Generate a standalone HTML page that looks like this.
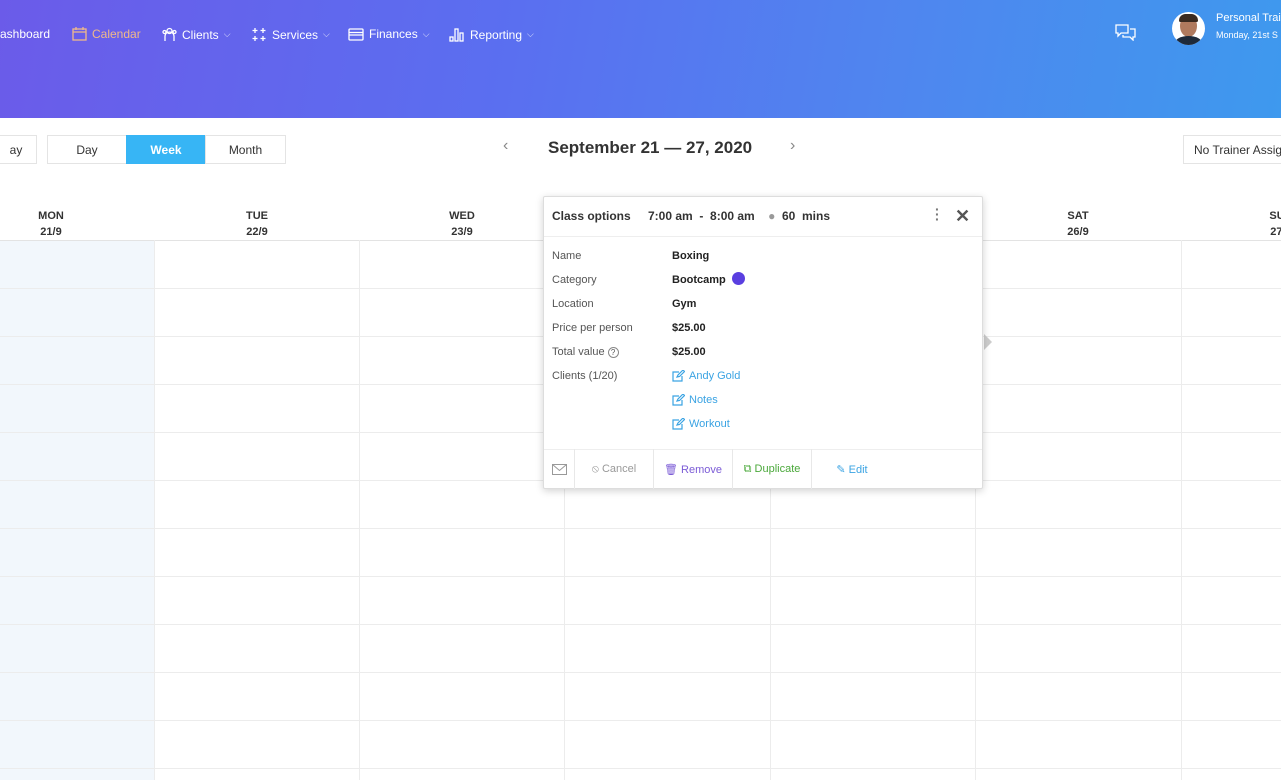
<!DOCTYPE html>
<html><head><style>
*{box-sizing:border-box;margin:0;padding:0}
body{width:1281px;height:780px;overflow:hidden;background:#fff;font-family:"Liberation Sans",Arial,sans-serif;position:relative}
.hdr{position:absolute;left:0;top:0;width:1281px;height:118px;background:linear-gradient(100deg,#6b5be9 0%,#5a6ff0 40%,#4f86ef 70%,#3e99ee 100%)}
.nav{position:absolute;top:27px;color:#fff;font-size:12px;display:flex;align-items:center;gap:5px}
.nav svg{stroke:#fff;fill:none;stroke-width:1.3}
.chev{font-size:9px;opacity:.8}
.btn{position:absolute;top:135px;height:29px;border:1px solid #e4e4e4;font-size:12px;color:#333;display:flex;align-items:center;justify-content:center}
.grid{position:absolute;left:0;top:240px;width:1281px;height:540px}
.dh{position:absolute;top:208px;width:80px;text-align:center;font-size:11px;font-weight:bold;color:#333;line-height:16px}
.pop{position:absolute;left:543px;top:196px;width:440px;height:293px;background:#fff;border:1px solid #ddd;box-shadow:0 2px 8px rgba(0,0,0,.18);border-radius:2px}
.lbl{position:absolute;left:8px;font-size:11px;color:#555}
.val{position:absolute;left:128px;font-size:11px;color:#222;font-weight:bold}
.lnk{position:absolute;left:128px;font-size:11px;color:#3aa3e3;display:flex;align-items:center;gap:4px}
.ft{position:absolute;top:252px;height:40px;border-right:1px solid #e8e8e8;display:flex;align-items:center;justify-content:center;font-size:11px;gap:4px}
</style></head><body>
<div class="hdr"></div>
<div class="nav" style="left:0">ashboard</div>
<div class="nav" style="left:72px;color:#f0b98a"><svg width="15" height="14" viewBox="0 0 15 14" style="stroke:#f0b98a"><rect x="1" y="2" width="13" height="11"/><path d="M1 5h13M4 0v3M11 0v3"/></svg>Calendar</div>
<div class="nav" style="left:162px"><svg width="15" height="15" viewBox="0 0 15 15"><circle cx="7.5" cy="4" r="2.5"/><path d="M3 14V9a4.5 4 0 0 1 9 0v5"/><circle cx="2.5" cy="5" r="1.5"/><circle cx="12.5" cy="5" r="1.5"/></svg>Clients<span class="chev">⌵</span></div>
<div class="nav" style="left:251px"><svg width="16" height="15" viewBox="0 0 16 15"><path d="M4 1v5M1.5 3.5h5M12 1v5M9.5 3.5h5M4 9v5M1.5 11.5h5M12 9v5M9.5 11.5h5"/></svg>Services<span class="chev">⌵</span></div>
<div class="nav" style="left:348px"><svg width="16" height="13" viewBox="0 0 16 13"><rect x="1" y="1" width="14" height="11" rx="1"/><path d="M1 4.5h14M1 7h14"/></svg>Finances<span class="chev">⌵</span></div>
<div class="nav" style="left:449px"><svg width="16" height="15" viewBox="0 0 16 15"><rect x="1" y="10" width="3" height="4"/><rect x="6" y="2" width="3" height="12"/><rect x="11" y="6" width="3" height="8"/></svg>Reporting<span class="chev">⌵</span></div>
<svg style="position:absolute;left:1115px;top:24px" width="21" height="17" viewBox="0 0 21 17" fill="none" stroke="#fff" stroke-width="1.3"><path d="M1 1h12v8H6l-3 3V9H1z"/><path d="M15 5h5v8h-2v3l-3-3H8v-2"/></svg>
<div style="position:absolute;left:1172px;top:12px;width:33px;height:33px;border-radius:50%;background:#fff;overflow:hidden"><div style="position:absolute;left:8px;top:3px;width:17px;height:22px;border-radius:50%;background:#b07a5e"></div><div style="position:absolute;left:7px;top:2px;width:19px;height:8px;border-radius:9px 9px 2px 2px;background:#3a2a20"></div><div style="position:absolute;left:3px;top:24px;width:27px;height:14px;border-radius:50% 50% 0 0;background:#1e2a3a"></div></div>
<div style="position:absolute;left:1216px;top:12px;color:#fff;font-size:11px;white-space:nowrap">Personal Trai</div>
<div style="position:absolute;left:1216px;top:30px;color:#fff;font-size:9px;white-space:nowrap">Monday, 21st S</div>

<div class="btn" style="left:-5px;width:42px">ay</div>
<div class="btn" style="left:47px;width:80px">Day</div>
<div class="btn" style="left:126px;width:80px;background:#37b5f5;color:#fff;border-color:#37b5f5;font-weight:bold">Week</div>
<div class="btn" style="left:205px;width:81px">Month</div>
<div style="position:absolute;left:503px;top:137px;color:#888;font-size:16px">‹</div>
<div style="position:absolute;left:548px;top:138px;font-size:17px;font-weight:bold;color:#333">September 21 — 27, 2020</div>
<div style="position:absolute;left:790px;top:137px;color:#888;font-size:16px">›</div>
<div class="btn" style="left:1183px;width:110px;justify-content:flex-start;padding-left:10px">No Trainer Assign</div>

<div class="dh" style="left:11px">MON<br>21/9</div>
<div class="dh" style="left:217px">TUE<br>22/9</div>
<div class="dh" style="left:422px">WED<br>23/9</div>
<div class="dh" style="left:1038px">SAT<br>26/9</div>
<div class="dh" style="left:1241px">SUN<br>27/9</div>

<svg class="grid" width="1281" height="540">
<rect x="0" y="0" width="154" height="540" fill="#f2f7fc"/>
<line x1="0" y1="0.5" x2="1281" y2="0.5" stroke="#e3e3e3"/>
<g stroke="#ececec">
<line x1="0" y1="48.5" x2="1281" y2="48.5"/><line x1="0" y1="96.5" x2="1281" y2="96.5"/><line x1="0" y1="144.5" x2="1281" y2="144.5"/><line x1="0" y1="192.5" x2="1281" y2="192.5"/><line x1="0" y1="240.5" x2="1281" y2="240.5"/><line x1="0" y1="288.5" x2="1281" y2="288.5"/><line x1="0" y1="336.5" x2="1281" y2="336.5"/><line x1="0" y1="384.5" x2="1281" y2="384.5"/><line x1="0" y1="432.5" x2="1281" y2="432.5"/><line x1="0" y1="480.5" x2="1281" y2="480.5"/><line x1="0" y1="528.5" x2="1281" y2="528.5"/>
<line x1="154.5" y1="0" x2="154.5" y2="540"/><line x1="359.5" y1="0" x2="359.5" y2="540"/><line x1="564.5" y1="0" x2="564.5" y2="540"/><line x1="770.5" y1="0" x2="770.5" y2="540"/><line x1="975.5" y1="0" x2="975.5" y2="540"/><line x1="1181.5" y1="0" x2="1181.5" y2="540"/>
</g></svg>
<div style="position:absolute;left:984px;top:334px;width:0;height:0;border-top:8px solid transparent;border-bottom:8px solid transparent;border-left:8px solid #ccc"></div>

<div class="pop">
<div style="position:absolute;left:0;top:0;width:438px;height:40px;border-bottom:1px solid #eee"></div>
<div style="position:absolute;left:8px;top:12px;font-size:12px;font-weight:bold;color:#333">Class options</div>
<div style="position:absolute;left:104px;top:12px;font-size:12px;font-weight:bold;color:#333;white-space:pre">7:00 am  -  8:00 am    <span style="color:#999">●</span>  60  mins</div>
<div style="position:absolute;left:391px;top:10px;color:#777;font-size:14px;font-weight:bold;line-height:5px">·<br>·<br>·</div>
<div style="position:absolute;left:411px;top:9px;color:#555;font-size:18px;font-weight:bold">✕</div>
<div class="lbl" style="top:53px">Name</div><div class="val" style="top:53px">Boxing</div>
<div class="lbl" style="top:77px">Category</div><div class="val" style="top:77px">Bootcamp</div>
<div style="position:absolute;left:188px;top:75px;width:13px;height:13px;border-radius:50%;background:#5a3fe0"></div>
<div class="lbl" style="top:101px">Location</div><div class="val" style="top:101px">Gym</div>
<div class="lbl" style="top:125px">Price per person</div><div class="val" style="top:125px">$25.00</div>
<div class="lbl" style="top:149px">Total value <span style="display:inline-block;width:11px;height:11px;border:1px solid #888;border-radius:50%;font-size:8px;text-align:center;line-height:10px">?</span></div><div class="val" style="top:149px">$25.00</div>
<div class="lbl" style="top:173px">Clients (1/20)</div>
<div class="lnk" style="top:173px"><svg width="13" height="12" viewBox="0 0 13 12" fill="none" stroke="#3aa3e3" stroke-width="1.2"><path d="M7 2H1v9h9V6"/><path d="M5 7l1-2 5-5 1.5 1.5-5 5z"/></svg>Andy Gold</div>
<div class="lnk" style="top:197px"><svg width="13" height="12" viewBox="0 0 13 12" fill="none" stroke="#3aa3e3" stroke-width="1.2"><path d="M7 2H1v9h9V6"/><path d="M5 7l1-2 5-5 1.5 1.5-5 5z"/></svg>Notes</div>
<div class="lnk" style="top:221px"><svg width="13" height="12" viewBox="0 0 13 12" fill="none" stroke="#3aa3e3" stroke-width="1.2"><path d="M7 2H1v9h9V6"/><path d="M5 7l1-2 5-5 1.5 1.5-5 5z"/></svg>Workout</div>
<div style="position:absolute;left:0;top:252px;width:438px;border-top:1px solid #eee"></div>
<div class="ft" style="left:0;width:31px"><svg width="15" height="11" viewBox="0 0 15 11" fill="none" stroke="#999"><rect x=".5" y=".5" width="14" height="10"/><path d="M.5 .5l7 6 7-6"/></svg></div>
<div class="ft" style="left:31px;width:79px;color:#999">⦸ Cancel</div>
<div class="ft" style="left:110px;width:79px;color:#7b5bd6">🗑︎ Remove</div>
<div class="ft" style="left:189px;width:79px;color:#4aa83a">⧉ Duplicate</div>
<div class="ft" style="left:268px;width:80px;color:#3aa3e3;border-right:none">✎ Edit</div>
</div>
</body></html>
